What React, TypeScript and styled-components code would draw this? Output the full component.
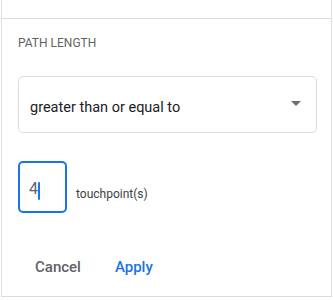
import React from "react";
import styled, { createGlobalStyle } from "styled-components";

const Global = createGlobalStyle`
  html, body { margin: 0; padding: 0; background: #ffffff; }
  body { font-family: Roboto, "Liberation Sans", Arial, sans-serif; -webkit-font-smoothing: antialiased; }
`;

const Panel = styled.div`
  box-sizing: border-box;
  width: 331px;
  height: 297px;
  margin-left: 1px;
  border-left: 1px solid #e0e0e0;
  border-right: 1px solid #e0e0e0;
  border-bottom: 1px solid #dadce0;
  display: flex;
  flex-direction: column;
  background: #fff;
`;

const TopArea = styled.div`
  height: 18px;
  border-bottom: 1px solid #dadce0;
  flex-shrink: 0;
`;

const Body = styled.div`
  display: flex;
  flex-direction: column;
  padding: 16px 14px 0 16px;
`;

const SectionTitle = styled.div`
  font-size: 12px;
  line-height: 16px;
  color: #5f6368;
  text-transform: uppercase;
  letter-spacing: 0;
`;

const SelectBox = styled.div`
  box-sizing: border-box;
  margin-top: 25px;
  height: 57px;
  border: 1px solid #dadce0;
  border-radius: 5px;
  display: flex;
  align-items: center;
  justify-content: space-between;
  padding: 6px 15px 0 11px;
  font-size: 14.5px;
  color: #202124;
`;

const Arrow = styled.svg`
  width: 10px;
  height: 5px;
  margin-top: -9px;
  fill: #6b6e72;
`;

const NumberRow = styled.div`
  margin-top: 28px;
  display: flex;
  align-items: center;
  gap: 9px;
`;

const NumberField = styled.div`
  box-sizing: border-box;
  width: 49px;
  height: 52px;
  border: 2px solid #1a73e8;
  border-radius: 5px;
  display: flex;
  align-items: center;
  padding: 4px 0 0 9px;
  font-size: 16px;
  line-height: 20px;
  color: #5f6368;
`;

const Caret = styled.span`
  display: inline-block;
  width: 2px;
  height: 18px;
  margin-top: 3px;
  background: #1a73e8;
  border-radius: 1px;
`;

const UnitLabel = styled.span`
  font-size: 12px;
  color: #3c4043;
  padding-top: 13px;
`;

const Actions = styled.div`
  margin-top: 36px;
  display: flex;
  gap: 0;
`;

const TextButton = styled.button<{ $primary?: boolean }>`
  font-family: inherit;
  font-size: 15px;
  font-weight: 500;
  line-height: 36px;
  height: 36px;
  padding: 0 17px;
  border: none;
  background: transparent;
  color: ${(p) => (p.$primary ? "#1a73e8" : "#5f6368")};
  cursor: pointer;
`;

export default function App() {
  return (
    <>
      <Global />
      <Panel>
        <TopArea />
        <Body>
          <SectionTitle>Path length</SectionTitle>
          <SelectBox>
            <span>greater than or equal to</span>
            <Arrow viewBox="0 0 10 5">
              <path d="M0 0 L10 0 L5 5 Z" />
            </Arrow>
          </SelectBox>
          <NumberRow>
            <NumberField>
              4<Caret />
            </NumberField>
            <UnitLabel>touchpoint(s)</UnitLabel>
          </NumberRow>
          <Actions>
            <TextButton>Cancel</TextButton>
            <TextButton $primary>Apply</TextButton>
          </Actions>
        </Body>
      </Panel>
    </>
  );
}
